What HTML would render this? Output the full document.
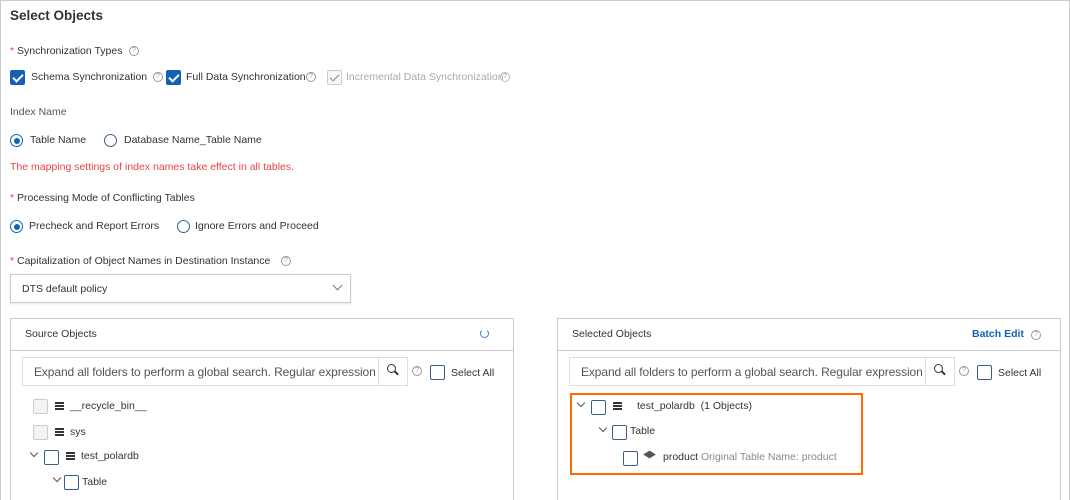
<!DOCTYPE html>
<html><head><meta charset="utf-8"><style>
*{box-sizing:border-box;margin:0;padding:0}
body{width:1070px;height:500px;background:#fff;font-family:"Liberation Sans",sans-serif;font-size:10.5px;color:#333;position:relative;overflow:hidden}
.a{position:absolute;white-space:nowrap}
.frame{position:absolute;left:0;top:0;width:1070px;height:500px;border:1px solid #ccc;border-bottom:none}
.cb{position:absolute;width:15px;height:15px;border:1px solid #3a5f8a;border-radius:2px;background:#fff}
.cb.on{background:#1361b5;border-color:#1361b5}
.cb.on::after{content:"";position:absolute;left:4px;top:1px;width:4px;height:8px;border:solid #fff;border-width:0 2px 2px 0;transform:rotate(45deg)}
.cb.dis{background:#f2f3f5;border-color:#ccc}
.cb.dis2{background:#f7f7f7;border-color:#ccc}
.cb.dis2::after{content:"";position:absolute;left:4px;top:1px;width:4px;height:8px;border:solid #888;border-width:0 1.5px 1.5px 0;transform:rotate(45deg)}
.rd{position:absolute;width:13px;height:13px;border:1px solid #3a5f8a;border-radius:50%;background:#fff}
.rd.on{border-color:#1361b5}
.rd.on::after{content:"";position:absolute;left:2.5px;top:2.5px;width:6px;height:6px;border-radius:50%;background:#1361b5}
.q{position:absolute;width:10px;height:10px;border:1px solid #999;border-radius:50%;font-size:7px;line-height:8px;text-align:center;color:#999}
.red{color:#e54545}
.panel{position:absolute;border:1px solid #ccc;border-bottom:none}
.ph{height:32px;border-bottom:1px solid #ccc;padding:9px 14px;font-size:10.5px}
.inp{position:absolute;height:29px;border:1px solid #ddd;background:#fff;font-size:12px;color:#555;padding:7px 11px;overflow:hidden;white-space:nowrap;letter-spacing:-0.1px}
.sb{position:absolute;height:29px;width:30px;border:1px solid #ddd}
.lst{position:absolute;width:9px;height:8px;border-top:2px solid #333;border-bottom:2px solid #333}
.lst::after{content:"";position:absolute;left:0;right:0;top:1px;height:2px;background:#333}
.chev{position:absolute;width:6px;height:6px;border:solid #555;border-width:0 1px 1px 0;transform:rotate(45deg)}
.mg{position:absolute;width:9px;height:9px;border:1.5px solid #333;border-radius:50%}
.mg::after{content:"";position:absolute;left:6px;top:7px;width:5px;height:1.5px;background:#333;transform:rotate(45deg)}
</style></head><body>
<div class="frame"></div>
<div class="a" style="left:10px;top:8px;font-size:13.5px;font-weight:bold;color:#333">Select Objects</div>

<div class="a" style="left:10px;top:45px"><span class="red">*</span> Synchronization Types</div>
<div class="q" style="left:129px;top:46px">?</div>

<div class="cb on" style="left:10px;top:70px"></div>
<div class="a" style="left:31px;top:71px">Schema Synchronization</div>
<div class="q" style="left:153px;top:72px">?</div>
<div class="cb on" style="left:166px;top:70px"></div>
<div class="a" style="left:186px;top:71px">Full Data Synchronization</div>
<div class="q" style="left:306px;top:72px">?</div>
<div class="cb dis2" style="left:327px;top:70px"></div>
<div class="a" style="left:346px;top:71px;color:#aaa">Incremental Data Synchronization</div>
<div class="q" style="left:500px;top:72px;border-color:#bbb">?</div>

<div class="a" style="left:10px;top:106px;color:#555">Index Name</div>
<div class="rd on" style="left:10px;top:134px"></div>
<div class="a" style="left:30px;top:134px">Table Name</div>
<div class="rd" style="left:104px;top:134px"></div>
<div class="a" style="left:124px;top:134px">Database Name_Table Name</div>
<div class="a red" style="left:10px;top:161px">The mapping settings of index names take effect in all tables.</div>

<div class="a" style="left:10px;top:192px"><span class="red">*</span> Processing Mode of Conflicting Tables</div>
<div class="rd on" style="left:10px;top:220px"></div>
<div class="a" style="left:29px;top:220px">Precheck and Report Errors</div>
<div class="rd" style="left:177px;top:220px"></div>
<div class="a" style="left:195px;top:220px">Ignore Errors and Proceed</div>

<div class="a" style="left:10px;top:255px"><span class="red">*</span> Capitalization of Object Names in Destination Instance</div>
<div class="q" style="left:281px;top:256px">?</div>
<div class="a" style="left:10px;top:274px;width:341px;height:29px;border:1px solid #ccc;box-shadow:0 1px 2px rgba(0,0,0,.1);padding:8px 11px;font-size:10.5px">DTS default policy</div>
<div class="chev" style="left:334px;top:282px;width:7px;height:7px;border-color:#777"></div>

<div class="panel" style="left:10px;top:318px;width:504px;height:182px"><div class="ph">Source Objects</div></div>
<div class="a" style="left:480px;top:329px;width:9px;height:9px;border:1.5px solid #3b82d6;border-top-color:transparent;border-radius:50%"></div>
<div class="inp" style="left:22px;top:357px;width:357px">Expand all folders to perform a global search. Regular expression</div>
<div class="sb" style="left:378px;top:357px"></div>
<div class="mg" style="left:387px;top:364px"></div>
<div class="q" style="left:412px;top:366px">?</div>
<div class="cb" style="left:430px;top:365px"></div>
<div class="a" style="left:451px;top:367px">Select All</div>

<div class="cb dis" style="left:33px;top:399px"></div><div class="lst" style="left:55px;top:402px"></div><div class="a" style="left:70px;top:400px">__recycle_bin__</div>
<div class="cb dis" style="left:33px;top:425px"></div><div class="lst" style="left:55px;top:428px"></div><div class="a" style="left:70px;top:426px">sys</div>
<div class="chev" style="left:31px;top:450px"></div><div class="cb" style="left:44px;top:450px"></div><div class="lst" style="left:66px;top:452px"></div><div class="a" style="left:81px;top:450px">test_polardb</div>
<div class="chev" style="left:54px;top:475px"></div><div class="cb" style="left:64px;top:475px"></div><div class="a" style="left:82px;top:476px">Table</div>

<div class="panel" style="left:557px;top:318px;width:504px;height:182px"><div class="ph">Selected Objects</div></div>
<div class="a" style="left:972px;top:328px;font-weight:bold;color:#1361b5">Batch Edit</div>
<div class="q" style="left:1031px;top:330px">?</div>
<div class="inp" style="left:569px;top:357px;width:357px">Expand all folders to perform a global search. Regular expression</div>
<div class="sb" style="left:925px;top:357px"></div>
<div class="mg" style="left:934px;top:364px"></div>
<div class="q" style="left:959px;top:366px">?</div>
<div class="cb" style="left:977px;top:365px"></div>
<div class="a" style="left:998px;top:367px">Select All</div>

<div class="a" style="left:570px;top:393px;width:293px;height:82px;border:2px solid #ff6a00"></div>
<div class="chev" style="left:578px;top:400px"></div><div class="cb" style="left:591px;top:400px"></div><div class="lst" style="left:613px;top:402px"></div><div class="a" style="left:637px;top:400px">test_polardb&nbsp; (1 Objects)</div>
<div class="chev" style="left:600px;top:425px"></div><div class="cb" style="left:612px;top:425px"></div><div class="a" style="left:630px;top:425px">Table</div>
<div class="cb" style="left:623px;top:451px"></div>
<div class="a" style="left:645px;top:450px;width:9px;height:9px;background:#555;transform:scaleY(.6) rotate(45deg)"></div>
<div class="a" style="left:663px;top:451px">product <span style="color:#888">Original Table Name: product</span></div>
</body></html>
